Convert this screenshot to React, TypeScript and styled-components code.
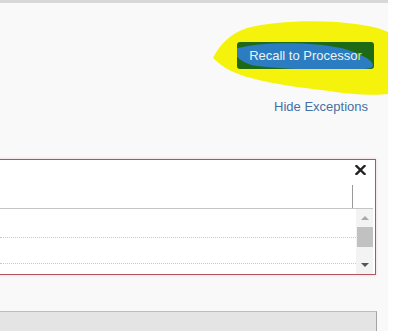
import React from 'react';
import styled, { createGlobalStyle } from 'styled-components';

const GlobalStyle = createGlobalStyle`
  html, body {
    margin: 0;
    padding: 0;
    background: #fff;
  }
  body {
    font-family: "Liberation Sans", Arial, sans-serif;
  }
`;

const Page = styled.div`
  width: 404px;
  height: 331px;
  display: flex;
  overflow: hidden;
  background: #fff;
`;

const MainPanel = styled.div`
  width: 388px;
  flex: 0 0 388px;
  background: #f9f9f9;
  border-top: 3px solid #d8d8d8;
  display: flex;
  flex-direction: column;
`;

const Gutter = styled.div`
  flex: 1;
  background: #fff;
`;

const ActionRow = styled.div`
  display: flex;
  justify-content: flex-end;
  padding: 39px 14px 0 0;
`;

const Highlight = styled.div`
  position: relative;
`;

const Marker = styled.svg`
  position: absolute;
  left: -30px;
  top: -24px;
  width: 181px;
  height: 78px;
  pointer-events: none;
`;

const Smear = styled.svg`
  position: absolute;
  inset: 0;
  width: 100%;
  height: 100%;
  pointer-events: none;
`;

const RecallButton = styled.button`
  position: relative;
  width: 137px;
  height: 27px;
  padding: 0;
  border: none;
  border-radius: 3px;
  background: #1e6a14;
  color: #eef3f3;
  font-family: "Liberation Sans", Arial, sans-serif;
  font-size: 13px;
  overflow: hidden;
  cursor: pointer;
`;

const ButtonLabel = styled.span`
  position: relative;
`;

const Tinted = styled.span`
  color: #d4e64a;
`;

const LinkRow = styled.div`
  display: flex;
  justify-content: flex-end;
  padding: 30px 20px 0 0;
`;

const TextLink = styled.a`
  color: #466fa3;
  font-size: 13px;
  line-height: 16px;
  text-decoration: none;
  cursor: pointer;
`;

const ExceptionBox = styled.div`
  margin-top: 44px;
  width: 376px;
  height: 116px;
  box-sizing: border-box;
  border: 1px solid #b0545e;
  border-left: none;
  background: #fff;
  box-shadow: 0 0 3px rgba(220, 90, 100, 0.25);
  display: flex;
  flex-direction: column;
  padding-right: 2px;
`;

const CloseRow = styled.div`
  height: 24px;
  display: flex;
  justify-content: flex-end;
  align-items: flex-start;
  padding: 5px 7px 0 0;
  box-sizing: border-box;
`;

const CloseIcon = styled.svg`
  width: 11px;
  height: 10px;
  cursor: pointer;
`;

const HeaderRow = styled.div`
  height: 24px;
  display: grid;
  grid-template-columns: 353px 1fr;
  border-bottom: 1px solid #c4c4c4;
`;

const HeaderCell = styled.div<{ $divider?: boolean }>`
  margin-top: 1px;
  border-right: ${(p) => (p.$divider ? '1px solid #9a9a9a' : 'none')};
`;

const Body = styled.div`
  flex: 1;
  display: grid;
  grid-template-columns: 1fr 17px;
  overflow: hidden;
`;

const Rows = styled.div`
  display: flex;
  flex-direction: column;
`;

const Row = styled.div<{ $h: number }>`
  height: ${(p) => p.$h}px;
  border-bottom: 1px dotted #c8c8c8;
  box-sizing: border-box;
`;

const Scrollbar = styled.div`
  background: #f3f3f3;
  display: flex;
  flex-direction: column;
  align-items: center;
`;

const Arrow = styled.div<{ $down?: boolean; $color: string }>`
  height: 18px;
  width: 100%;
  display: flex;
  align-items: center;
  justify-content: center;
  &::before {
    content: '';
    border-left: 4px solid transparent;
    border-right: 4px solid transparent;
    ${(p) =>
      p.$down
        ? `border-top: 4px solid ${p.$color};`
        : `border-bottom: 4px solid ${p.$color};`}
  }
`;

const Thumb = styled.div`
  width: 16px;
  height: 20px;
  background: #c1c1c1;
`;

const Spacer = styled.div`
  flex: 1;
`;

const FooterBar = styled.div`
  margin-top: 36px;
  width: 377px;
  flex: 1;
  box-sizing: border-box;
  background: #e4e4e4;
  border-top: 1px solid #bcbcbc;
  border-right: 1px solid #a5a5a5;
`;

export default function App() {
  return (
    <>
      <GlobalStyle />
      <Page>
        <MainPanel>
          <ActionRow>
            <Highlight>
              <Marker viewBox="0 0 181 78">
                <path
                  d="M6 40 C12 28 22 16 40 10 C62 4 98 2 130 4 C150 6 166 8 176 12 L181 14 L181 76 C168 78 140 76 122 73 C96 70 66 66 44 60 C28 56 16 50 6 40 Z"
                  fill="#f5f30c"
                />
              </Marker>
              <RecallButton>
                <Smear viewBox="0 0 137 27" preserveAspectRatio="none">
                  <path
                    d="M-2 7 C18 0 72 -1 104 6 C124 11 142 21 134 26 C116 30 60 28 20 24 C6 22 -4 14 -2 7 Z"
                    fill="#2b7cc0"
                  />
                </Smear>
                <ButtonLabel>
                  Recall to Processo<Tinted>r</Tinted>
                </ButtonLabel>
              </RecallButton>
            </Highlight>
          </ActionRow>
          <LinkRow>
            <TextLink>Hide Exceptions</TextLink>
          </LinkRow>
          <ExceptionBox>
            <CloseRow>
              <CloseIcon viewBox="0 0 11 10">
                <path d="M1.5 1 L9.5 9 M9.5 1 L1.5 9" stroke="#222" strokeWidth="2.4" strokeLinecap="square" />
              </CloseIcon>
            </CloseRow>
            <HeaderRow>
              <HeaderCell $divider />
              <HeaderCell />
            </HeaderRow>
            <Body>
              <Rows>
                <Row $h={29} />
                <Row $h={26} />
              </Rows>
              <Scrollbar>
                <Arrow $color="#a8a8a8" />
                <Thumb />
                <Spacer />
                <Arrow $down $color="#555" />
              </Scrollbar>
            </Body>
          </ExceptionBox>
          <FooterBar />
        </MainPanel>
        <Gutter />
      </Page>
    </>
  );
}
